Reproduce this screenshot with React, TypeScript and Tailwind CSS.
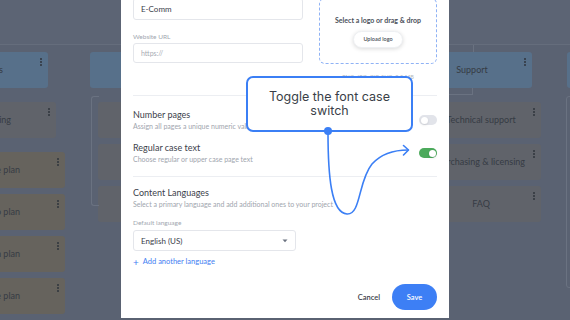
import React from 'react';

type Node = { x: number; y: number; w: number; label: string; tone: 'blue' | 'gray' | 'tan'; align?: 'left' | 'center' };

const NODES: Node[] = [
  { x: -60, y: 52, w: 108, label: 'Sales', tone: 'blue' },
  { x: 90, y: 52, w: 108, label: '', tone: 'blue' },
  { x: -52, y: 102, w: 108, label: 'Pricing', tone: 'gray' },
  { x: 98, y: 102, w: 100, label: '', tone: 'gray' },
  { x: 98, y: 144, w: 100, label: '', tone: 'gray' },
  { x: 98, y: 186, w: 100, label: '', tone: 'gray' },
  { x: -44, y: 152, w: 109, label: 'Free plan', tone: 'tan' },
  { x: -44, y: 194, w: 109, label: 'Pro plan', tone: 'tan' },
  { x: -44, y: 236, w: 109, label: 'Team plan', tone: 'tan' },
  { x: -44, y: 278, w: 109, label: 'Enterprise plan', tone: 'tan' },
  { x: 412, y: 52, w: 120, label: 'Support', tone: 'blue', align: 'center' },
  { x: 421, y: 102, w: 120, label: 'Technical support', tone: 'gray', align: 'center' },
  { x: 421, y: 144, w: 120, label: 'Purchasing & licensing', tone: 'gray', align: 'center' },
  { x: 421, y: 186, w: 120, label: 'FAQ', tone: 'gray', align: 'center' },
  { x: 567, y: 52, w: 100, label: '', tone: 'blue' },
];

const TONES = {
  blue: 'bg-[#57708a]',
  gray: 'bg-[#60636a]',
  tan: 'bg-[#66635d]',
};

function Dots() {
  return (
    <div className="absolute right-[6px] top-[6px] flex flex-col gap-[1px]">
      <span className="w-[2px] h-[2px] rounded-full bg-[#2f343c]" />
      <span className="w-[2px] h-[2px] rounded-full bg-[#2f343c]" />
      <span className="w-[2px] h-[2px] rounded-full bg-[#2f343c]" />
    </div>
  );
}

function Toggle({ on }: { on: boolean }) {
  return (
    <div className={`w-[18px] h-[10px] rounded-full p-[1.5px] flex ${on ? 'bg-[#4caa5c] justify-end' : 'bg-[#e2e4ea] justify-start'}`}>
      <span className="w-[7px] h-[7px] rounded-full bg-white shadow-sm" />
    </div>
  );
}

export default function App() {
  return (
    <div className="relative w-[570px] h-[320px] overflow-hidden bg-[#5a6272]" style={{ fontFamily: 'Lato, "Open Sans", sans-serif' }}>
      {/* background chart */}
      <div className="absolute inset-x-0 top-0 h-[45px] border-b border-[#656d7c] bg-[#5c6474]" />
      {NODES.map((n, i) => (
        <div key={i} className={`absolute h-[36px] rounded-[3px] ${TONES[n.tone]} flex items-center ${n.align === 'center' ? 'justify-center' : 'justify-end pr-[45px]'} text-[9px] text-[#363b44] whitespace-nowrap`}
          style={{ left: n.x, top: n.y, width: n.w }}>
          {n.label}
          <Dots />
        </div>
      ))}
      <div className="absolute left-[91px] top-[96px] w-[8px] h-[110px] border border-r-0 border-[#6a7281] rounded-l-[3px]" />
      <div className="absolute left-[473px] top-[45px] w-px h-[7px] bg-[#6a7281]" />
      <div className="absolute left-[449px] top-[88px] w-[24px] h-[7px] border-r border-b border-[#6a7281]" />
      <div className="absolute left-[566px] top-[96px] w-[20px] h-[192px] border border-[#6a7281] rounded-[3px]" />

      {/* modal */}
      <div className="absolute left-[121px] top-0 w-[328px] h-[318px] bg-white px-[12px]">
        <div className="flex gap-[16px] -mt-[2px]">
          <div className="w-[170px] flex flex-col">
            <div className="h-[22px] rounded-[3px] border border-[#e4e6eb] flex items-center px-[7px] text-[8px] text-[#3b404a]">E-Comm</div>
            <div className="mt-[12px] text-[6.5px] text-[#a2a7b0] leading-[9px]">Website URL</div>
            <div className="mt-[2px] h-[20px] rounded-[3px] border border-[#e4e6eb] flex items-center px-[7px] text-[7px] text-[#a7abb3]">https://</div>
          </div>
          <div className="flex-1 flex flex-col items-center">
            <div className="w-full h-[66px] rounded-[6px] border border-dashed border-[#8fb2f5] flex flex-col items-center pt-[17px]">
              <div className="text-[7px] font-bold text-[#4a4f59] leading-[9px]">Select a logo or drag &amp; drop</div>
              <div className="mt-[6px] w-[50px] h-[17px] rounded-full bg-white shadow-[0_1px_4px_rgba(0,0,0,0.15)] border border-[#eef0f3] flex items-center justify-center text-[5.5px] font-semibold text-[#4a4f59]">Upload logo</div>
            </div>
            <div className="mt-[9px] text-[5.5px] leading-[8px] text-[#b3b7be] tracking-wide">PNG, JPG, GIF, SVG, 2.5 MB</div>
          </div>
        </div>

        <div className="mt-[14px] border-t border-[#eceef2]" />

        <div className="mt-[13px] flex items-center justify-between">
          <div>
            <div className="text-[9px] text-[#3c414b] leading-[12px]">Number pages</div>
            <div className="text-[7px] text-[#a0a5ae] leading-[10px]">Assign all pages a unique numeric value</div>
          </div>
          <Toggle on={false} />
        </div>
        <div className="mt-[11px] flex items-center justify-between">
          <div>
            <div className="text-[9px] text-[#3c414b] leading-[12px]">Regular case text</div>
            <div className="text-[7px] text-[#a0a5ae] leading-[10px]">Choose regular or upper case page text</div>
          </div>
          <Toggle on={true} />
        </div>

        <div className="mt-[12px] border-t border-[#eceef2]" />

        <div className="mt-[10px] text-[9px] text-[#3c414b] leading-[12px]">Content Languages</div>
        <div className="text-[7px] text-[#a0a5ae] leading-[10px]">Select a primary language and add additional ones to your project</div>
        <div className="mt-[9px] text-[6.5px] text-[#a2a7b0] leading-[9px]">Default language</div>
        <div className="mt-[3px] w-[163px] h-[21px] rounded-[3px] border border-[#e4e6eb] flex items-center justify-between px-[7px] text-[8px] text-[#3b404a]">
          <span>English (US)</span>
          <svg width="6" height="4" viewBox="0 0 6 4"><path d="M0.5 0.5 L3 3.3 L5.5 0.5 Z" fill="#6b7280" /></svg>
        </div>
        <div className="mt-[5px] flex items-center gap-[4px] text-[7.5px] text-[#3f7ef2]">
          <span className="text-[10px] leading-[10px]">+</span>
          <span>Add another language</span>
        </div>

        <div className="mt-[17px] flex items-center justify-end gap-[12px]">
          <span className="text-[7.5px] font-semibold text-[#3b404a]">Cancel</span>
          <div className="w-[45px] h-[26px] rounded-full bg-[#3d7ff5] flex items-center justify-center text-[7.5px] font-semibold text-white">Save</div>
        </div>
      </div>

      {/* callout */}
      <div className="absolute left-[246px] top-[76px] w-[167px] h-[56px] rounded-[7px] border-2 border-[#3b7ff5] bg-white flex items-center justify-center text-center text-[12.5px] leading-[14px] text-[#3a3f48]" style={{ fontFamily: 'Inter, sans-serif' }}>
        Toggle the font case<br />switch
      </div>
      <svg className="absolute left-0 top-0" width="570" height="320" viewBox="0 0 570 320" fill="none">
        <path d="M328 132 C328 175 331 213 347 214 C361 215 358 181 372 164 C382 153 395 150 408 150" stroke="#3b7ff5" strokeWidth="1.6" strokeLinecap="round" />
        <path d="M403.5 145.5 L408.5 150 L403.5 155" stroke="#3b7ff5" strokeWidth="1.6" strokeLinecap="round" strokeLinejoin="round" />
        <circle cx="328" cy="131" r="4" fill="#3b7ff5" />
      </svg>
    </div>
  );
}
